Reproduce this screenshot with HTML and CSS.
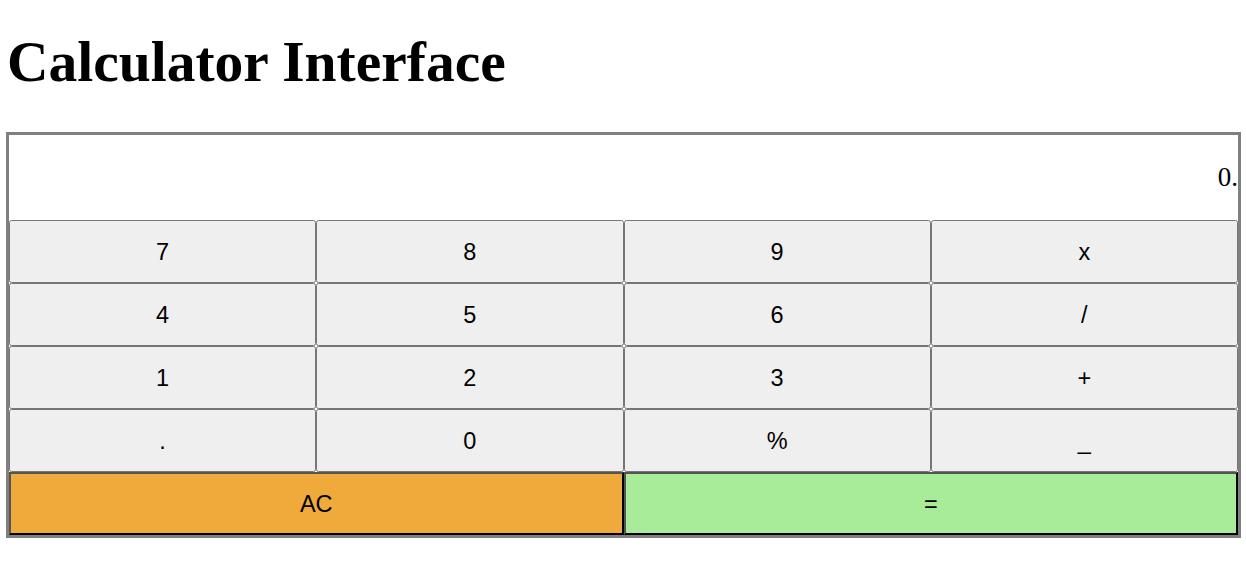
FILE: index.html
```html
<!DOCTYPE html>
<html lang="en">
<head>
<meta charset="utf-8">
<title>Calculator Interface</title>
<link rel="stylesheet" href="styles.css">
</head>
<body>
<h1 class="title">Calculator Interface</h1>
<div class="calculator">
  <div class="display">0.</div>
  <div class="keys">
    <button class="key">7</button>
    <button class="key">8</button>
    <button class="key">9</button>
    <button class="key">x</button>
    <button class="key">4</button>
    <button class="key">5</button>
    <button class="key">6</button>
    <button class="key">/</button>
    <button class="key">1</button>
    <button class="key">2</button>
    <button class="key">3</button>
    <button class="key">+</button>
    <button class="key">.</button>
    <button class="key">0</button>
    <button class="key">%</button>
    <button class="key">_</button>
    <button class="key key-wide key-clear">AC</button>
    <button class="key key-wide key-equals">=</button>
  </div>
</div>
</body>
</html>
```

FILE: styles.css
```css
html, body {
  background: #ffffff;
}

body {
  margin: 0 5px 0 6px;
  font-family: "Liberation Serif", "Times New Roman", serif;
  color: #000000;
}

.title {
  font-family: "Liberation Serif", "Times New Roman", serif;
  font-weight: bold;
  font-size: 57.5px;
  margin: 29px 0 38px 1px;
}

.calculator {
  border: 3px solid #808080;
}

.display {
  height: 85px;
  display: flex;
  align-items: center;
  justify-content: flex-end;
  font-family: "Liberation Serif", "Times New Roman", serif;
  font-size: 27px;
  overflow: hidden;
  white-space: nowrap;
}

.keys {
  display: grid;
  grid-template-columns: repeat(4, 1fr);
  grid-auto-rows: 63px;
}

.key {
  width: 100%;
  height: 63px;
  margin: 0;
  padding-top: 3px;
  font-family: "Liberation Sans", Arial, sans-serif;
  font-size: 23.5px;
  color: #000000;
}

.key-wide {
  grid-column: span 2;
}

.key-clear {
  background-color: #f0a93b;
}

.key-equals {
  background-color: #a8ec9a;
}
```
